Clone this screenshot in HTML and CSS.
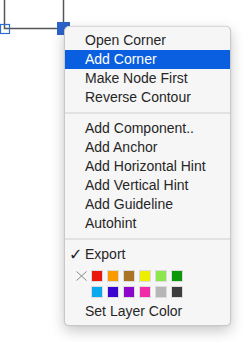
FILE: index.html
```html
<!DOCTYPE html>
<html>
<head>
<meta charset="utf-8">
<link rel="stylesheet" href="styles.css">
</head>
<body>
<div class="canvas">
  <svg class="glyph" width="246" height="60" viewBox="0 0 246 60">
    <path d="M4.5 0 V28.5 H63.5 V0" fill="none" stroke="#555" stroke-width="1.5"/>
    <rect x="0.5" y="24.5" width="9" height="9" fill="none" stroke="#2d6fd6" stroke-width="1.2"/>
    <rect x="57" y="22" width="13" height="13" fill="#2c63c9"/>
  </svg>
  <div class="menu">
    <div class="item">Open Corner</div>
    <div class="item active">Add Corner</div>
    <div class="item">Make Node First</div>
    <div class="item">Reverse Contour</div>
    <div class="sep"></div>
    <div class="item">Add Component..</div>
    <div class="item">Add Anchor</div>
    <div class="item">Add Horizontal Hint</div>
    <div class="item">Add Vertical Hint</div>
    <div class="item">Add Guideline</div>
    <div class="item">Autohint</div>
    <div class="sep"></div>
    <div class="item checked"><span class="check">✓</span>Export</div>
    <div class="colors">
      <svg class="nocolor" width="11" height="10" viewBox="0 0 11 10"><path d="M0.5 0.5 L10.5 9.5 M10.5 0.5 L0.5 9.5" stroke="#8a8a8a" stroke-width="1" fill="none"/></svg>
      <div class="grid">
        <span class="sw" style="background:#e8180c"></span>
        <span class="sw" style="background:#f89a00"></span>
        <span class="sw" style="background:#a97424"></span>
        <span class="sw" style="background:#ecf000"></span>
        <span class="sw" style="background:#8ee64e"></span>
        <span class="sw" style="background:#0a980a"></span>
        <span class="sw" style="background:#0aa8ee"></span>
        <span class="sw" style="background:#3a06cf"></span>
        <span class="sw" style="background:#8c06cc"></span>
        <span class="sw" style="background:#f02aa8"></span>
        <span class="sw" style="background:#b6b6b6"></span>
        <span class="sw" style="background:#3c3c3c"></span>
      </div>
    </div>
    <div class="item">Set Layer Color</div>
  </div>
</div>
</body>
</html>
```

FILE: styles.css
```css
html, body {
  margin: 0;
  padding: 0;
  background: #ffffff;
}
body {
  font-family: "Liberation Sans", Arial, sans-serif;
}
.canvas {
  position: relative;
  width: 246px;
  height: 342px;
  overflow: hidden;
}
.glyph {
  position: absolute;
  left: 0;
  top: 0;
}
.menu {
  position: absolute;
  left: 64px;
  top: 26px;
  width: 167px;
  box-sizing: border-box;
  padding: 4px 0 4px;
  background: #f6f6f6;
  border: 1px solid #c9c9c9;
  border-top-color: #d8d8d8;
  border-radius: 5px;
  box-shadow: 0 5px 14px rgba(0,0,0,0.22), 0 0 1px rgba(0,0,0,0.2);
}
.item {
  height: 19px;
  line-height: 19px;
  padding-left: 20px;
  font-size: 14px;
  color: #262626;
  white-space: nowrap;
  position: relative;
}
.item.active {
  background: #0a5fe0;
  color: #ffffff;
}
.check {
  position: absolute;
  left: 4px;
  top: 0;
  font-family: "DejaVu Sans", sans-serif;
  font-size: 16px;
  color: #222;
}
.sep {
  height: 2px;
  margin: 5px 0 5px;
  background: #e2e2e2;
}
.colors {
  display: flex;
  align-items: flex-start;
  padding: 6px 0 6px 11px;
  height: 38px;
  box-sizing: border-box;
}
.nocolor {
  margin-top: 1px;
  margin-right: 4px;
}
.grid {
  display: grid;
  grid-template-columns: repeat(6, 12px);
  grid-auto-rows: 12px;
  column-gap: 4px;
  row-gap: 4px;
}
.sw {
  display: block;
  width: 10px;
  height: 10px;
  border: 1px solid #dcdcdc;
}
```
